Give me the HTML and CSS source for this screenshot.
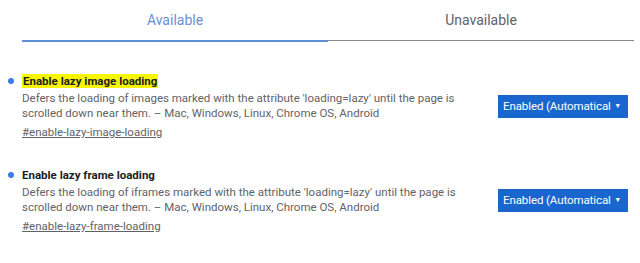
FILE: index.html
```html
<!DOCTYPE html>
<html lang="en">
<head>
  <meta charset="UTF-8">
  <meta name="viewport" content="width=device-width, initial-scale=1.0">
  <title>Experiments</title>
  <link rel="stylesheet" href="styles.css">
</head>
<body>
  <div class="tabs">
    <div class="tab selected">Available</div>
    <div class="tab">Unavailable</div>
  </div>

  <div class="experiment">
    <div class="title"><span class="dot"></span><span class="highlight">Enable lazy image loading</span></div>
    <div class="row">
      <p class="desc">Defers the loading of images marked with the attribute 'loading=lazy' until the page is scrolled down near them. – Mac, Windows, Linux, Chrome OS, Android</p>
      <div class="select"><span>Enabled (Automatical</span><span class="arrow">▼</span></div>
    </div>
    <a class="permalink" href="#">#enable-lazy-image-loading</a>
  </div>

  <div class="experiment">
    <div class="title"><span class="dot"></span><span>Enable lazy frame loading</span></div>
    <div class="row">
      <p class="desc">Defers the loading of iframes marked with the attribute 'loading=lazy' until the page is scrolled down near them. – Mac, Windows, Linux, Chrome OS, Android</p>
      <div class="select"><span>Enabled (Automatical</span><span class="arrow">▼</span></div>
    </div>
    <a class="permalink" href="#">#enable-lazy-frame-loading</a>
  </div>
</body>
</html>
```

FILE: styles.css
```css
body {
  margin: 0;
  font-family: Roboto, "Liberation Sans", sans-serif;
  background-color: #ffffff;
  color: #202124;
}

.tabs {
  display: grid;
  grid-template-columns: 1fr 1fr;
  margin: 0 6px 0 22px;
}

.tab {
  text-align: center;
  font-size: 14px;
  color: #5f6368;
  padding-top: 11px;
  height: 28px;
  border-bottom: 1px solid #8a8a8a;
  margin-top: 1px;
}

.tab.selected {
  color: #6b8fd6;
  border-bottom: 2px solid #5c8fd6;
}

.experiment {
  padding-left: 22px;
  margin-top: 32px;
}

.experiment + .experiment {
  margin-top: 28px;
}

.title {
  position: relative;
  font-size: 11.5px;
  font-weight: bold;
  line-height: 14px;
}

.dot {
  position: absolute;
  left: -14px;
  top: 4px;
  width: 6px;
  height: 6px;
  border-radius: 50%;
  background-color: #3b7be6;
}

.highlight {
  background-color: #f7f700;
  padding: 0 1px;
}

.row {
  display: flex;
  align-items: center;
  justify-content: space-between;
  padding-right: 12px;
  margin-top: 3px;
}

.desc {
  margin: 0;
  width: 440px;
  font-size: 11.5px;
  line-height: 15px;
  color: #5f6368;
}

.select {
  display: flex;
  align-items: center;
  justify-content: space-between;
  box-sizing: border-box;
  width: 130px;
  height: 23px;
  padding: 0 7px 0 5px;
  background-color: #1a66cf;
  color: #ffffff;
  font-size: 11.5px;
  letter-spacing: -0.1px;
  white-space: nowrap;
}

.arrow {
  font-size: 7px;
}

.permalink {
  display: inline-block;
  margin-top: 3px;
  font-size: 11.5px;
  color: #5f6368;
  text-decoration: underline;
}
```
